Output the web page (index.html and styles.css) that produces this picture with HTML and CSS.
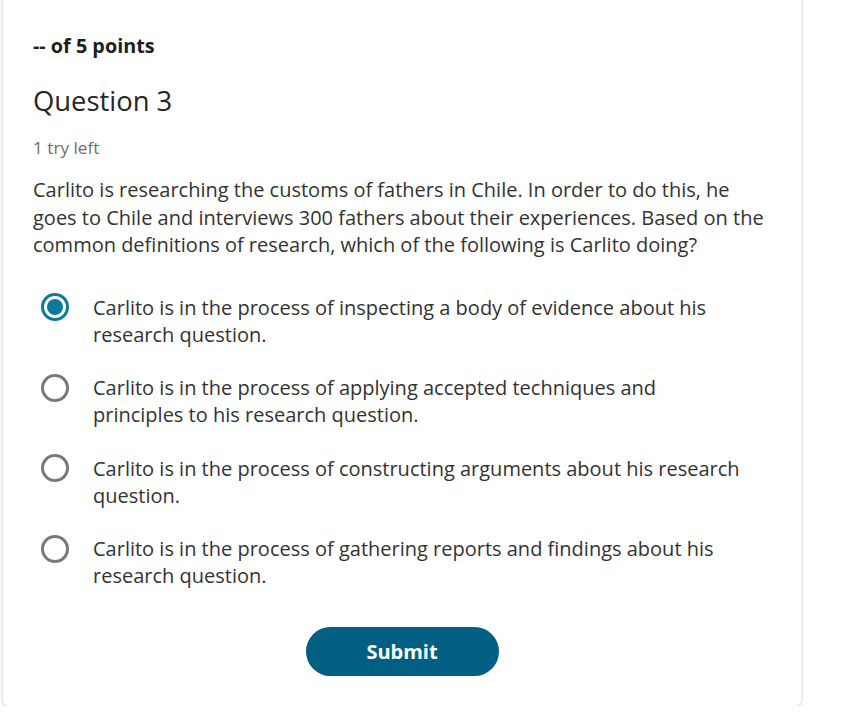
FILE: index.html
```html
<!DOCTYPE html>
<html lang="en">
<head>
<meta charset="utf-8">
<title>Question 3</title>
<link rel="stylesheet" href="styles.css">
</head>
<body>
<div class="card">
  <div class="points">-- of 5 points</div>
  <h2 class="title">Question 3</h2>
  <div class="tries">1 try left</div>
  <p class="prompt">Carlito is researching the customs of fathers in Chile. In order to do this, he goes to Chile and interviews 300 fathers about their experiences. Based on the common definitions of research, which of the following is Carlito doing?</p>
  <div class="options">
    <label class="option">
      <span class="radio checked"><span class="dot"></span></span>
      <span class="text">Carlito is in the process of inspecting a body of evidence about his research question.</span>
    </label>
    <label class="option">
      <span class="radio"></span>
      <span class="text">Carlito is in the process of applying accepted techniques and principles to his research question.</span>
    </label>
    <label class="option">
      <span class="radio"></span>
      <span class="text">Carlito is in the process of constructing arguments about his research question.</span>
    </label>
    <label class="option">
      <span class="radio"></span>
      <span class="text">Carlito is in the process of gathering reports and findings about his research question.</span>
    </label>
  </div>
  <div class="actions">
    <button class="submit">Submit</button>
  </div>
</div>
</body>
</html>
```

FILE: styles.css
```css
html, body {
  margin: 0;
  padding: 0;
  background: #ffffff;
}
body {
  font-family: "Open Sans", "Noto Sans", sans-serif;
  color: #333333;
}
.card {
  width: 798px;
  margin: -20px 0 0 3px;
  padding: 52px 30px 30px 30px;
  box-sizing: border-box;
  background: #fff;
  border-radius: 6px;
  box-shadow: 0 1px 4px rgba(0,0,0,0.22);
}
.points {
  font-size: 19.8px;
  font-weight: 700;
  line-height: 27px;
  color: #1e1e1e;
}
.title {
  margin: 24px 0 0 0;
  font-size: 27.4px;
  font-weight: 400;
  line-height: 36px;
  color: #262626;
}
.tries {
  margin-top: 17px;
  font-size: 17.2px;
  line-height: 24px;
  color: #6e6e6e;
}
.prompt {
  margin: 16px 0 0 0;
  font-size: 20px;
  line-height: 27.5px;
  color: #333;
}
.options {
  margin-top: 35px;
  display: flex;
  flex-direction: column;
  gap: 26.5px;
  padding-right: 26px;
}
.option {
  display: flex;
  align-items: flex-start;
  gap: 24px;
  padding-left: 8px;
  font-size: 20px;
  line-height: 27px;
  color: #333;
}
.radio {
  flex: none;
  width: 28px;
  height: 28px;
  box-sizing: border-box;
  border: 3px solid #7a7a7a;
  border-radius: 50%;
  margin-top: -0.5px;
  display: flex;
  align-items: center;
  justify-content: center;
}
.radio.checked {
  border-color: #0d7a9a;
}
.dot {
  width: 16px;
  height: 16px;
  border-radius: 50%;
  background: #0d7a9a;
}
.actions {
  margin-top: 38px;
  display: flex;
  justify-content: center;
}
.submit {
  width: 193px;
  height: 49px;
  border: none;
  border-radius: 25px;
  background: #005f83;
  color: #fff;
  font-family: "Open Sans", "Noto Sans", sans-serif;
  font-size: 20px;
  font-weight: 700;
}
```
